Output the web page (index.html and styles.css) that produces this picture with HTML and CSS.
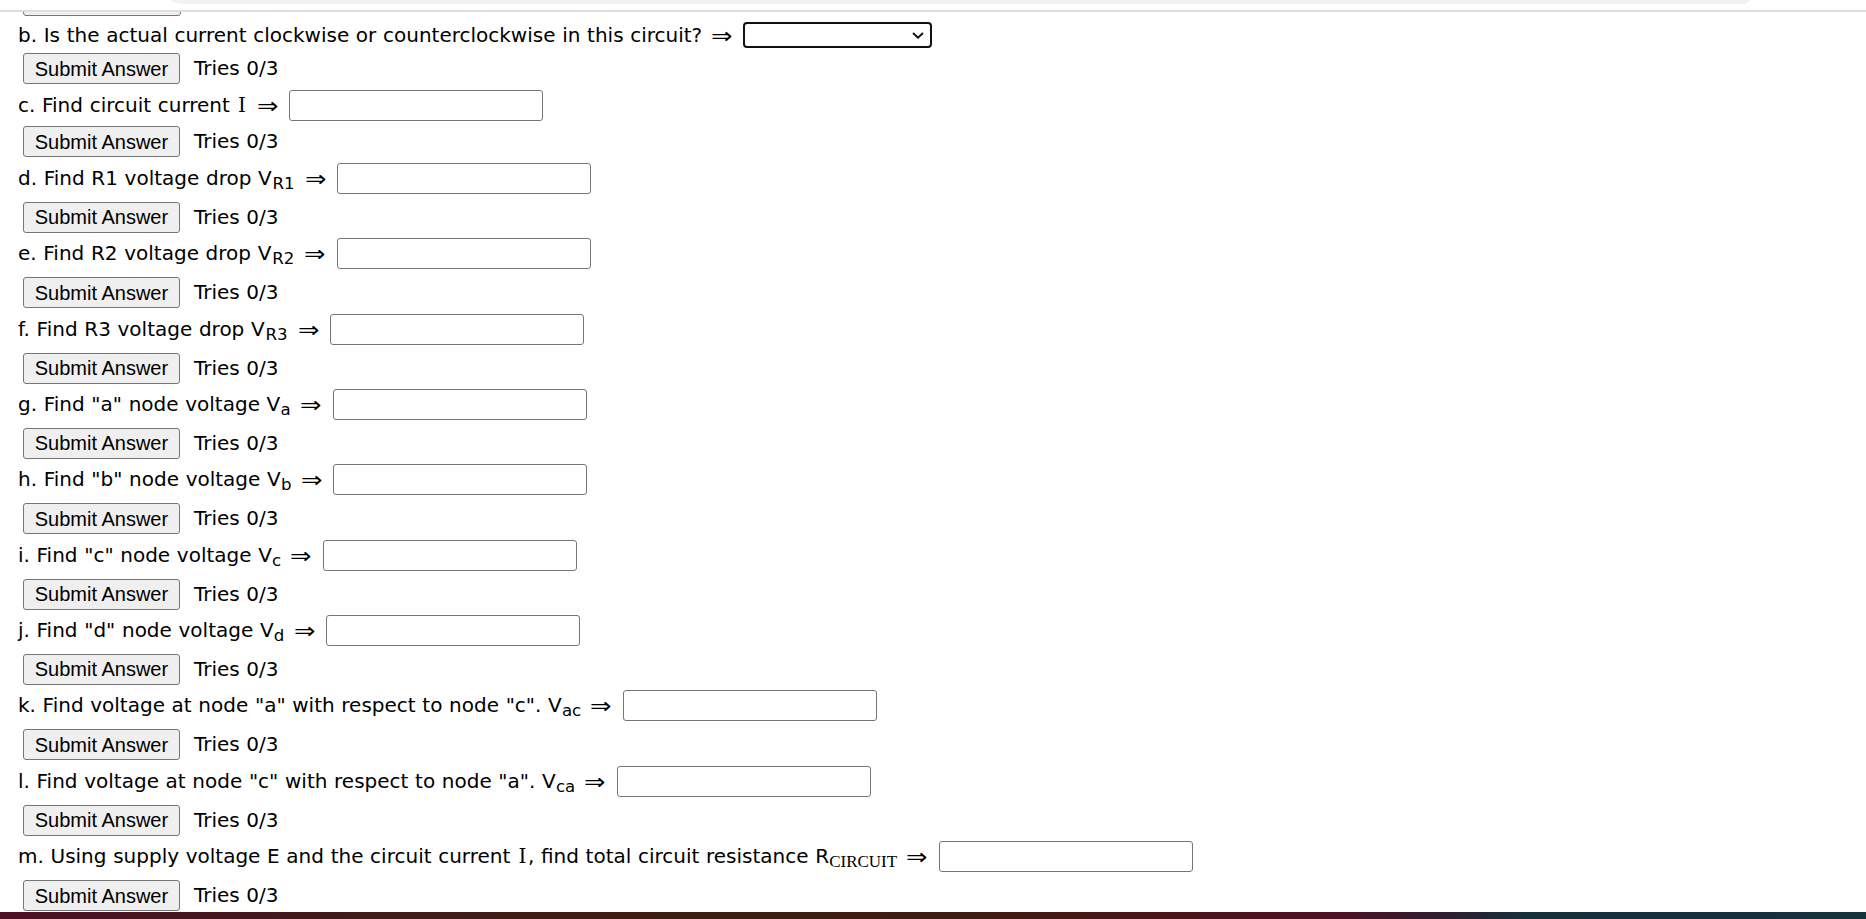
FILE: index.html
```html
<!DOCTYPE html>
<html lang="en">
<head>
<meta charset="utf-8">
<title>Circuit problem</title>
<link rel="stylesheet" href="styles.css">
</head>
<body>
<div class="topbar"><div class="topbar-tab"></div></div>
<main class="page">
  <div class="btnrow cut"><button class="submit" aria-label="Submit Answer"></button></div>

  <div class="qrow selrow">
    <label class="q">b. Is the actual current clockwise or counterclockwise in this circuit?<span class="arr"><span>⇒</span></span></label>
    <span class="selwrap"><select class="sel"><option></option></select><svg class="chev" width="12" height="7" viewBox="0 0 12 7"><path d="M1 1 L6 5.6 L11 1" fill="none" stroke="#111" stroke-width="1.9"/></svg></span>
  </div>
  <div class="btnrow"><button class="submit">Submit Answer</button><span class="tries">Tries 0/3</span></div>

  <div class="qrow">
    <label class="q">c. Find circuit current <span class="var">I</span><span class="arr"><span>⇒</span></span></label>
    <input class="ans" type="text">
  </div>
  <div class="btnrow"><button class="submit">Submit Answer</button><span class="tries">Tries 0/3</span></div>

  <div class="qrow sub-row">
    <label class="q">d. Find R1 voltage drop V<sub>R1</sub><span class="arr"><span>⇒</span></span></label>
    <input class="ans" type="text">
  </div>
  <div class="btnrow"><button class="submit">Submit Answer</button><span class="tries">Tries 0/3</span></div>

  <div class="qrow sub-row">
    <label class="q">e. Find R2 voltage drop V<sub>R2</sub><span class="arr"><span>⇒</span></span></label>
    <input class="ans" type="text">
  </div>
  <div class="btnrow"><button class="submit">Submit Answer</button><span class="tries">Tries 0/3</span></div>

  <div class="qrow sub-row">
    <label class="q">f. Find R3 voltage drop V<sub>R3</sub><span class="arr"><span>⇒</span></span></label>
    <input class="ans" type="text">
  </div>
  <div class="btnrow"><button class="submit">Submit Answer</button><span class="tries">Tries 0/3</span></div>

  <div class="qrow sub-row">
    <label class="q">g. Find "a" node voltage V<sub class="tight">a</sub><span class="arr"><span>⇒</span></span></label>
    <input class="ans" type="text">
  </div>
  <div class="btnrow"><button class="submit">Submit Answer</button><span class="tries">Tries 0/3</span></div>

  <div class="qrow sub-row">
    <label class="q">h. Find "b" node voltage V<sub class="tight">b</sub><span class="arr"><span>⇒</span></span></label>
    <input class="ans" type="text">
  </div>
  <div class="btnrow"><button class="submit">Submit Answer</button><span class="tries">Tries 0/3</span></div>

  <div class="qrow sub-row">
    <label class="q">i. Find "c" node voltage V<sub class="tight">c</sub><span class="arr"><span>⇒</span></span></label>
    <input class="ans" type="text">
  </div>
  <div class="btnrow"><button class="submit">Submit Answer</button><span class="tries">Tries 0/3</span></div>

  <div class="qrow sub-row">
    <label class="q">j. Find "d" node voltage V<sub class="tight">d</sub><span class="arr"><span>⇒</span></span></label>
    <input class="ans" type="text">
  </div>
  <div class="btnrow"><button class="submit">Submit Answer</button><span class="tries">Tries 0/3</span></div>

  <div class="qrow sub-row">
    <label class="q">k. Find voltage at node "a" with respect to node "c". V<sub class="tight">ac</sub><span class="arr"><span>⇒</span></span></label>
    <input class="ans" type="text">
  </div>
  <div class="btnrow"><button class="submit">Submit Answer</button><span class="tries">Tries 0/3</span></div>

  <div class="qrow sub-row">
    <label class="q">l. Find voltage at node "c" with respect to node "a". V<sub class="tight">ca</sub><span class="arr"><span>⇒</span></span></label>
    <input class="ans" type="text">
  </div>
  <div class="btnrow"><button class="submit">Submit Answer</button><span class="tries">Tries 0/3</span></div>

  <div class="qrow sub-row">
    <label class="q">m. Using supply voltage E and the circuit current <span class="var">I</span>, find total circuit resistance R<sub class="serif">CIRCUIT</sub><span class="arr"><span>⇒</span></span></label>
    <input class="ans" type="text">
  </div>
  <div class="btnrow"><button class="submit">Submit Answer</button><span class="tries">Tries 0/3</span></div>
</main>
<div class="footer"></div>
</body>
</html>
```

FILE: styles.css
```css
* { box-sizing: border-box; }

html, body {
  margin: 0;
  padding: 0;
  background: #ffffff;
}

body {
  font-family: "DejaVu Sans", Verdana, sans-serif;
  font-size: 20px;
  color: #000000;
  overflow: hidden;
  height: 919px;
}

.topbar {
  position: fixed;
  top: 0;
  left: 0;
  right: 0;
  height: 12px;
  background: #ffffff;
  border-bottom: 2px solid #dedede;
  z-index: 2;
}

.topbar-tab {
  margin-left: 171px;
  width: 1578px;
  height: 4px;
  background: #f0f1f4;
  border-radius: 0 0 6px 20px / 0 0 4px 4px;
}

.page {
  padding-left: 18px;
}

.btnrow {
  display: flex;
  align-items: flex-start;
  height: 36.47px;
}

.btnrow.cut {
  height: 16px;
  overflow: hidden;
  align-items: flex-end;
  margin-bottom: 5.5px;
}

.submit {
  flex: none;
  height: 31px;
  margin: 0 0 0 5px;
  padding: 0 10.75px;
  border: 1px solid #767676;
  border-radius: 3px;
  background: #efefef;
  color: #000000;
  font-family: "Liberation Sans", Arial, sans-serif;
  font-size: 20px;
  line-height: 22px;
}

.cut .submit {
  width: 158px;
}

.tries {
  margin-left: 14px;
  line-height: 31px;
  white-space: nowrap;
  word-spacing: 0.3px;
}

.qrow {
  display: flex;
  align-items: flex-start;
  height: 36.7px;
}

.qrow.sub-row {
  height: 38.9px;
}

.qrow.selrow {
  height: 31.8px;
}

.q {
  line-height: 31px;
  white-space: nowrap;
  word-spacing: 0.3px;
}

.selrow .q {
  line-height: 27.8px;
}

.q sub {
  font-size: 16.6px;
  line-height: 0;
  vertical-align: -4px;
  padding: 0 0.8px;
}

.q sub.tight {
  padding: 0 0 0 0.2px;
}

.q sub.serif {
  font-family: "Liberation Serif", "Times New Roman", serif;
  font-size: 17px;
  padding: 0;
}

.var {
  font-family: "DejaVu Serif", serif;
  padding: 0 1.5px;
}

.arr {
  display: inline-block;
  width: 22px;
  margin: 0 11px 0 9px;
  text-align: center;
  vertical-align: -1px;
}

.selrow .arr {
  margin-right: 10px;
}

.arr span {
  display: inline-block;
  font-family: "DejaVu Sans", sans-serif;
  font-size: 21px;
  transform: scaleX(1.22);
}

.ans {
  flex: none;
  width: 254px;
  height: 31px;
  margin: 0;
  padding: 0 4px;
  border: 1px solid #767676;
  border-radius: 3px;
  background: #ffffff;
  font-family: "Liberation Sans", Arial, sans-serif;
  font-size: 20px;
}

.selwrap {
  position: relative;
  flex: none;
  margin-top: 0.8px;
  width: 189px;
  height: 25.4px;
}

.sel {
  appearance: none;
  -webkit-appearance: none;
  display: block;
  width: 100%;
  height: 100%;
  margin: 0;
  padding: 0 4px;
  border: 2px solid #111111;
  border-radius: 4px;
  background: #ffffff;
  font-family: "Liberation Sans", Arial, sans-serif;
  font-size: 20px;
}

.chev {
  position: absolute;
  right: 8px;
  top: 10px;
  pointer-events: none;
}

.footer {
  position: fixed;
  left: 0;
  right: 0;
  bottom: 0;
  height: 7px;
  background: linear-gradient(90deg, #4c1024 0%, #3f1a1a 18%, #3b1f12 40%, #3d1c12 52%, #4a1418 62%, #4c1024 72%, #2a2030 78%, #16303a 82%, #15313a 100%);
}
```
